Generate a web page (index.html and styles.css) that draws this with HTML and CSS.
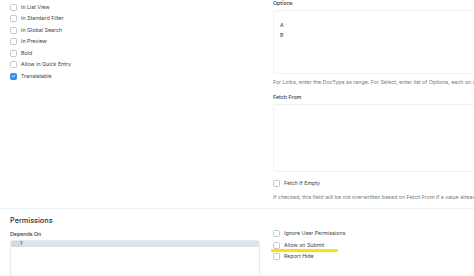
FILE: index.html
```html
<!DOCTYPE html>
<html>
<head>
<meta charset="utf-8">
<link rel="stylesheet" href="styles.css">
</head>
<body>
<div class="page">
  <section class="top">
    <div class="col-left">
      <div class="check-row"><span class="box"></span><span>In List View</span></div>
      <div class="check-row"><span class="box"></span><span>In Standard Filter</span></div>
      <div class="check-row"><span class="box"></span><span>In Global Search</span></div>
      <div class="check-row"><span class="box"></span><span>In Preview</span></div>
      <div class="check-row"><span class="box"></span><span>Bold</span></div>
      <div class="check-row"><span class="box"></span><span>Allow in Quick Entry</span></div>
      <div class="check-row"><span class="box checked"><svg viewBox="0 0 10 10" width="6" height="6"><path d="M2.2 5.2 L4.2 7.1 L7.9 3" fill="none" stroke="#fff" stroke-width="1.6" stroke-linecap="round" stroke-linejoin="round"/></svg></span><span>Translatable</span></div>
    </div>
    <div class="col-right">
      <div class="label">Options</div>
      <div class="textarea options"><div>A</div><div>B</div></div>
      <div class="help">For Links, enter the DocType as range. For Select, enter list of Options, each on a new line.</div>
      <div class="label fetch-label">Fetch From</div>
      <div class="textarea fetch"></div>
      <div class="check-row fetch-empty"><span class="box"></span><span>Fetch If Empty</span></div>
      <div class="help help2">If checked, this field will be not overwritten based on Fetch From if a value already exists.</div>
    </div>
  </section>
  <hr class="divider">
  <section class="perm">
    <h2 class="perm-title">Permissions</h2>
    <div class="perm-grid">
      <div class="col-left">
        <div class="label depends">Depends On</div>
        <div class="editor">
          <div class="code-line"><span class="gutter">1</span><span class="line-body"></span></div>
        </div>
      </div>
      <div class="col-right perm-checks">
        <div class="check-row"><span class="box"></span><span>Ignore User Permissions</span></div>
        <div class="check-row marked"><span class="box"></span><span>Allow on Submit</span><span class="highlight"></span></div>
        <div class="check-row"><span class="box"></span><span>Report Hide</span></div>
      </div>
    </div>
  </section>
</div>
</body>
</html>
```

FILE: styles.css
```css
html, body {
  margin: 0;
  padding: 0;
  background: #ffffff;
  overflow: hidden;
}
body {
  width: 474px;
  height: 276px;
  font-family: Inter, "Noto Sans", "Liberation Sans", sans-serif;
  color: #383b3f;
  font-size: 5.3px;
}
.page {
  width: 474px;
  overflow: hidden;
}
.top {
  display: grid;
  grid-template-columns: 250px 240px;
  column-gap: 13px;
  padding-left: 10px;
}
.col-left {
  padding-top: 1.25px;
}
.check-row {
  display: flex;
  align-items: center;
  gap: 4px;
  height: 11.5px;
  line-height: 7px;
  color: #3c4046;
  white-space: nowrap;
}
.box {
  width: 5px;
  height: 5px;
  border: 0.8px solid #c3c8ce;
  border-radius: 1.5px;
  background: #fff;
  flex: none;
  display: flex;
  align-items: center;
  justify-content: center;
}
.box.checked {
  background: #2d8ff0;
  border-color: #2d8ff0;
}
.col-right {
  padding-top: 0;
  min-width: 0;
}
.label {
  line-height: 7px;
  height: 7px;
  color: #33373c;
  font-weight: 500;
}
.textarea {
  margin-top: 3px;
  border: 1px solid #eef0f2;
  border-radius: 3px;
  background: #ffffff;
  box-sizing: border-box;
}
.options {
  height: 64px;
  padding: 10px 6px 0;
  line-height: 9.5px;
  color: #3b3f44;
}
.help {
  margin-top: 5px;
  line-height: 7px;
  color: #737a82;
  white-space: nowrap;
  overflow: hidden;
}
.fetch-label {
  margin-top: 8px;
}
.fetch {
  height: 68px;
}
.fetch-empty {
  margin-top: 6px;
}
.help2 {
  margin-top: 4px;
}
.divider {
  border: 0;
  border-top: 1px solid #eceff1;
  margin: 7.5px 0 0;
  width: 474px;
}
.perm {
  padding-left: 10px;
}
.perm-title {
  margin: 6.5px 0 0;
  font-size: 7.3px;
  font-weight: 500;
  line-height: 9px;
  color: #2c3036;
}
.perm-grid {
  display: grid;
  grid-template-columns: 250px 200px;
  column-gap: 13px;
  margin-top: 1px;
}
.perm-grid .col-left {
  padding-top: 5.5px;
}
.editor {
  margin-top: 2px;
  height: 60px;
  border: 1px solid #e8ebee;
  border-bottom: 0;
  border-radius: 3px 3px 0 0;
  box-sizing: border-box;
}
.code-line {
  display: flex;
  height: 6px;
  line-height: 6px;
  background: #dde3eb;
}
.gutter {
  width: 11px;
  padding-right: 1px;
  text-align: right;
  background: #d3dae4;
  color: #3b4047;
  font-size: 4.6px;
  flex: none;
}
.perm-checks {
  padding-top: 2.25px;
}
.marked {
  position: relative;
}
.highlight {
  position: absolute;
  left: -2px;
  top: 10px;
  width: 67px;
  height: 3px;
  background: #f6e500;
  border-radius: 1px;
}
```
